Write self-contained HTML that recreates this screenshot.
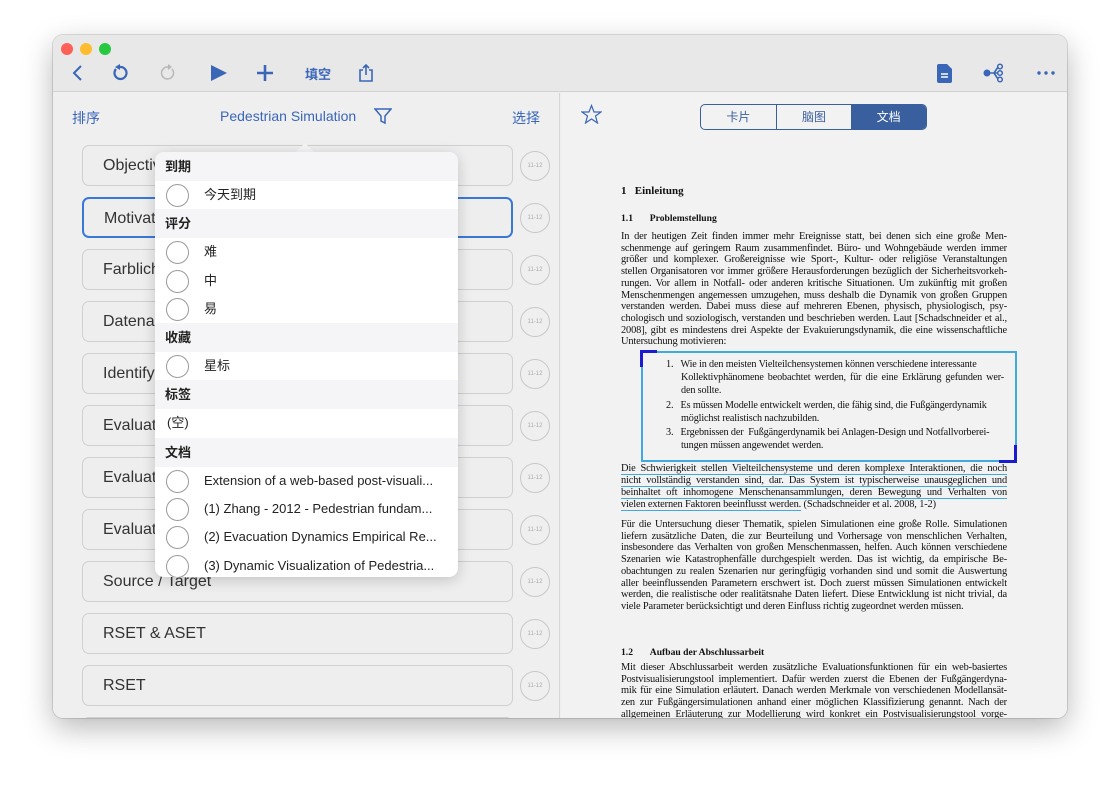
<!DOCTYPE html>
<html><head><meta charset="utf-8"><style>
*{margin:0;padding:0;box-sizing:border-box}
body{width:1120px;height:789px;background:#fff;position:relative;overflow:hidden;font-family:"Liberation Sans","Noto Sans CJK SC",sans-serif}
.win{position:absolute;left:53px;top:35px;width:1014px;height:683px;border-radius:10px;overflow:hidden;background:#efefef;box-shadow:0 10px 30px rgba(0,0,0,.28),0 0 0 1px rgba(0,0,0,.12)}
.tb{position:absolute;left:0;top:0;width:100%;height:57px;background:#e8e8e8;border-bottom:1px solid #d2d2d2}
.dot{position:absolute;top:8px;width:12px;height:12px;border-radius:50%}
.abs{position:absolute}
.blue{color:#3a66b8}
.left{position:absolute;left:0;top:58px;width:507px;height:625px;background:#efefef;border-right:1px solid #d6d6d6}
.right{position:absolute;left:508px;top:58px;width:506px;height:625px;background:#f2f2f2}
.card{position:absolute;left:29px;width:431px;height:41px;border:1px solid #d0d0d0;border-radius:7px;background:#eeeeee;font-size:16px;color:#333;padding-left:20px;line-height:39px}
.circ{position:absolute;left:467px;width:30px;height:30px;border:1px solid #c8c8c8;border-radius:50%;font-size:6px;color:#aaa;text-align:center;line-height:28px}
.pop{position:absolute;left:155px;top:152px;width:303px;height:425px;background:#fff;border-radius:9px;box-shadow:0 3px 14px rgba(0,0,0,.18);overflow:hidden}
.h{height:29px;background:#f5f5f7;font-size:13px;font-weight:bold;color:#222;padding-left:10px;line-height:29px}
.it{height:28.3px;font-size:13px;color:#222;position:relative;line-height:28px;padding-left:49px;white-space:nowrap}
.it i{position:absolute;left:11px;top:3px;width:23px;height:23px;border:1.3px solid #9a9a9a;border-radius:50%}
.doc{position:absolute;font-family:"Liberation Serif",serif;color:#111}
.l{position:absolute;left:621px;width:386px;font-size:10.4px;height:12px;line-height:12px;text-align:justify;text-align-last:justify;overflow:hidden;font-family:"Liberation Serif",serif;color:#111;letter-spacing:-.15px;white-space:normal}
.ll{text-align-last:left}
.u{border-bottom:1px solid #3fa9e0}
</style></head><body>
<div class="win">
 <div class="tb">
  <div class="dot" style="left:8px;background:#fe5f57"></div>
  <div class="dot" style="left:27px;background:#febc2e"></div>
  <div class="dot" style="left:46px;background:#28c840"></div>
  <svg class="abs" style="left:18px;top:29px" width="14" height="18"><path d="M10 2 L3 9 L10 16" stroke="#3a66b8" stroke-width="2" fill="none"/></svg>
  <svg class="abs" style="left:58px;top:29px" width="18" height="18"><path d="M5 5 A6 6 0 1 0 9 3" stroke="#3a66b8" stroke-width="2.2" fill="none"/><path d="M9 0 L9 6 L4 3z" fill="#3a66b8"/></svg>
  <svg class="abs" style="left:106px;top:29px" width="18" height="18"><path d="M13 5 A6 6 0 1 1 9 3" stroke="#b8b8b8" stroke-width="1.5" fill="none"/><path d="M9 0 L9 6 L13 3z" fill="#b8b8b8"/></svg>
  <svg class="abs" style="left:157px;top:29px" width="18" height="18"><path d="M1 1 L17 9 L1 17z" fill="#3a66b8"/></svg>
  <svg class="abs" style="left:203px;top:29px" width="18" height="18"><path d="M9 1V17M1 9H17" stroke="#3a66b8" stroke-width="2.6"/></svg>
  <div class="abs blue" style="left:252px;top:29px;font-size:13px;font-weight:bold">填空</div>
  <svg class="abs" style="left:305px;top:28px" width="16" height="20"><path d="M5 7H2V18H14V7H11" stroke="#3a66b8" stroke-width="1.6" fill="none"/><path d="M8 12V2M5 5L8 2L11 5" stroke="#3a66b8" stroke-width="1.6" fill="none"/></svg>
  <svg class="abs" style="left:884px;top:29px" width="15" height="19"><path d="M2 0H10L15 5V17Q15 19 13 19H2Q0 19 0 17V2Q0 0 2 0z" fill="#3a66b8"/><path d="M4 10H11M4 13H11" stroke="#fff" stroke-width="1.4"/></svg>
  <svg class="abs" style="left:930px;top:28px" width="22" height="20"><circle cx="4" cy="10" r="3.5" fill="#3a66b8"/><path d="M7 10H11M11 10L15 4M11 10L15 16M11 10H15" stroke="#3a66b8" stroke-width="1.6" fill="none"/><circle cx="17" cy="3.5" r="2.3" stroke="#3a66b8" stroke-width="1.5" fill="none"/><circle cx="17" cy="10" r="2.3" stroke="#3a66b8" stroke-width="1.5" fill="none"/><circle cx="17" cy="16.5" r="2.3" stroke="#3a66b8" stroke-width="1.5" fill="none"/></svg>
  <svg class="abs" style="left:984px;top:35px" width="18" height="6"><circle cx="2" cy="3" r="1.7" fill="#3a66b8"/><circle cx="9" cy="3" r="1.7" fill="#3a66b8"/><circle cx="16" cy="3" r="1.7" fill="#3a66b8"/></svg>
 </div>
 <div class="left">
  <div class="abs blue" style="left:19px;top:15px;font-size:14px">排序</div>
  <div class="abs blue" style="left:167px;top:15px;font-size:14px">Pedestrian Simulation</div>
  <svg class="abs" style="left:321px;top:15px" width="18" height="17"><path d="M1 1H17L11 8V15L7 13V8z" stroke="#3a66b8" stroke-width="1.5" fill="none"/></svg>
  <div class="abs blue" style="left:459px;top:15px;font-size:14px">选择</div>
 </div>
 <div class="right">
  <svg class="abs" style="left:20px;top:11px" width="21" height="20"><path d="M10.5 1.5L13 8H20L14.5 12L16.5 19L10.5 15L4.5 19L6.5 12L1 8H8z" stroke="#3a66b8" stroke-width="1.2" fill="none"/></svg>
  <div class="abs" style="left:139px;top:11px;width:227px;height:26px;border:1px solid #3a5f9f;border-radius:5px;overflow:hidden;display:flex;font-size:12px;color:#3a5f9f">
   <div style="flex:1;text-align:center;line-height:24px;border-right:1px solid #3a5f9f">卡片</div>
   <div style="flex:1;text-align:center;line-height:24px">脑图</div>
   <div style="flex:1;text-align:center;line-height:24px;background:#3a5f9f;color:#fff">文档</div>
  </div>
 </div>
</div>
<div style="position:absolute;left:53px;top:35px;width:507px;height:683px;overflow:hidden">
 <div class="card" style="top:110px">Objective</div><div class="circ" style="top:116px">11-12</div>
 <div class="card" style="top:162px;border:2px solid #3a78d8">Motivation</div><div class="circ" style="top:168px">11-12</div>
 <div class="card" style="top:214px">Farblich</div><div class="circ" style="top:220px">11-12</div>
 <div class="card" style="top:266px">Datenaufbereitung</div><div class="circ" style="top:272px">11-12</div>
 <div class="card" style="top:318px">Identify</div><div class="circ" style="top:324px">11-12</div>
 <div class="card" style="top:370px">Evaluate</div><div class="circ" style="top:376px">11-12</div>
 <div class="card" style="top:422px">Evaluate</div><div class="circ" style="top:428px">11-12</div>
 <div class="card" style="top:474px">Evaluate</div><div class="circ" style="top:480px">11-12</div>
 <div class="card" style="top:526px">Source / Target</div><div class="circ" style="top:532px">11-12</div>
 <div class="card" style="top:578px">RSET &amp; ASET</div><div class="circ" style="top:584px">11-12</div>
 <div class="card" style="top:630px">RSET</div><div class="circ" style="top:636px">11-12</div>
 <div class="card" style="top:682px"></div>
</div>
<div class="abs" style="left:295px;top:143px;width:0;height:0;border-left:10px solid transparent;border-right:10px solid transparent;border-bottom:10px solid #f5f5f7"></div>
<div class="pop">
 <div class="h">到期</div>
 <div class="it"><i></i>今天到期</div>
 <div class="h">评分</div>
 <div class="it"><i></i>难</div>
 <div class="it"><i></i>中</div>
 <div class="it"><i></i>易</div>
 <div class="h">收藏</div>
 <div class="it"><i></i>星标</div>
 <div class="h">标签</div>
 <div class="it" style="padding-left:12px">(空)</div>
 <div class="h">文档</div>
 <div class="it"><i></i>Extension of a web-based post-visuali...</div>
 <div class="it"><i></i>(1) Zhang - 2012 - Pedestrian fundam...</div>
 <div class="it"><i></i>(2) Evacuation Dynamics Empirical Re...</div>
 <div class="it"><i></i>(3) Dynamic Visualization of Pedestria...</div>
</div>
<div class="doc" style="left:621px;top:185px;font-size:11px;font-weight:bold">1&nbsp;&nbsp;&nbsp;Einleitung</div>
<div class="doc" style="left:621px;top:213px;font-size:9.6px;font-weight:bold">1.1&nbsp;&nbsp;&nbsp;&nbsp;&nbsp;&nbsp;&nbsp;Problemstellung</div>
<div class="l" style="top:231px">In der heutigen Zeit finden immer mehr Ereignisse statt, bei denen sich eine große Men-</div>
<div class="l" style="top:242.7px">schenmenge auf geringem Raum zusammenfindet. Büro- und Wohngebäude werden immer</div>
<div class="l" style="top:254.4px">größer und komplexer. Großereignisse wie Sport-, Kultur- oder religiöse Veranstaltungen</div>
<div class="l" style="top:266.1px">stellen Organisatoren vor immer größere Herausforderungen bezüglich der Sicherheitsvorkeh-</div>
<div class="l" style="top:277.8px">rungen. Vor allem in Notfall- oder anderen kritische Situationen. Um zukünftig mit großen</div>
<div class="l" style="top:289.5px">Menschenmengen angemessen umzugehen, muss deshalb die Dynamik von großen Gruppen</div>
<div class="l" style="top:301.2px">verstanden werden. Dabei muss diese auf mehreren Ebenen, physisch, physiologisch, psy-</div>
<div class="l" style="top:312.9px">chologisch und soziologisch, verstanden und beschrieben werden. Laut [Schadschneider et al.,</div>
<div class="l" style="top:324.6px">2008], gibt es mindestens drei Aspekte der Evakuierungsdynamik, die eine wissenschaftliche</div>
<div class="l ll" style="top:336.3px">Untersuchung motivieren:</div>
<div class="abs" style="left:641px;top:351px;width:376px;height:111px;border:2px solid #3fa9e0"></div>
<div class="abs" style="left:640px;top:350px;width:17px;height:3px;background:#1a1ad0"></div>
<div class="abs" style="left:640px;top:350px;width:3px;height:17px;background:#1a1ad0"></div>
<div class="abs" style="left:999px;top:460px;width:18px;height:3px;background:#1a1ad0"></div>
<div class="abs" style="left:1014px;top:445px;width:3px;height:18px;background:#1a1ad0"></div>
<div class="l ll" style="top:359px;left:666px;width:340px;font-size:10.2px">1.&nbsp;&nbsp;&nbsp;Wie in den meisten Vielteilchensystemen können verschiedene interessante</div>
<div class="l" style="top:372px;left:681px;width:323px;font-size:10.2px">Kollektivphänomene beobachtet werden, für die eine Erklärung gefunden wer-</div>
<div class="l ll" style="top:385px;left:681px;width:323px;font-size:10.2px">den sollte.</div>
<div class="l ll" style="top:400px;left:666px;width:340px;font-size:10.2px">2.&nbsp;&nbsp;&nbsp;Es müssen Modelle entwickelt werden, die fähig sind, die Fußgängerdynamik</div>
<div class="l ll" style="top:413px;left:681px;width:323px;font-size:10.2px">möglichst realistisch nachzubilden.</div>
<div class="l ll" style="top:427px;left:666px;width:340px;font-size:10.2px">3.&nbsp;&nbsp;&nbsp;Ergebnissen der&nbsp; Fußgängerdynamik bei Anlagen-Design und Notfallvorberei-</div>
<div class="l ll" style="top:440px;left:681px;width:323px;font-size:10.2px">tungen müssen angewendet werden.</div>
<div class="l u" style="top:463px">Die Schwierigkeit stellen Vielteilchensysteme und deren komplexe Interaktionen, die noch</div>
<div class="l u" style="top:475px">nicht vollständig verstanden sind, dar. Das System ist typischerweise unausgeglichen und</div>
<div class="l u" style="top:487px">beinhaltet oft inhomogene Menschenansammlungen, deren Bewegung und Verhalten von</div>
<div class="l ll" style="top:499px"><span class="u">vielen externen Faktoren beeinflusst werden.</span> (Schadschneider et al. 2008, 1-2)</div>
<div class="l" style="top:519px">Für die Untersuchung dieser Thematik, spielen Simulationen eine große Rolle. Simulationen</div>
<div class="l" style="top:530.7px">liefern zusätzliche Daten, die zur Beurteilung und Vorhersage von menschlichen Verhalten,</div>
<div class="l" style="top:542.4px">insbesondere das Verhalten von großen Menschenmassen, helfen. Auch können verschiedene</div>
<div class="l" style="top:554.1px">Szenarien wie Katastrophenfälle durchgespielt werden. Das ist wichtig, da empirische Be-</div>
<div class="l" style="top:565.8px">obachtungen zu realen Szenarien nur geringfügig vorhanden sind und somit die Auswertung</div>
<div class="l" style="top:577.5px">aller beeinflussenden Parametern erschwert ist. Doch zuerst müssen Simulationen entwickelt</div>
<div class="l" style="top:589.2px">werden, die realistische oder realitätsnahe Daten liefert. Diese Entwicklung ist nicht trivial, da</div>
<div class="l ll" style="top:600.9px">viele Parameter berücksichtigt und deren Einfluss richtig zugeordnet werden müssen.</div>
<div class="doc" style="left:621px;top:647px;font-size:9.6px;font-weight:bold">1.2&nbsp;&nbsp;&nbsp;&nbsp;&nbsp;&nbsp;&nbsp;Aufbau der Abschlussarbeit</div>
<div class="l" style="top:662px">Mit dieser Abschlussarbeit werden zusätzliche Evaluationsfunktionen für ein web-basiertes</div>
<div class="l" style="top:673.7px">Postvisualisierungstool implementiert. Dafür werden zuerst die Ebenen der Fußgängerdyna-</div>
<div class="l" style="top:685.4px">mik für eine Simulation erläutert. Danach werden Merkmale von verschiedenen Modellansät-</div>
<div class="l" style="top:697.1px">zen zur Fußgängersimulationen anhand einer möglichen Klassifizierung genannt. Nach der</div>
<div class="l" style="top:708.8px;height:9.2px">allgemeinen Erläuterung zur Modellierung wird konkret ein Postvisualisierungstool vorge-</div>
</body></html>
